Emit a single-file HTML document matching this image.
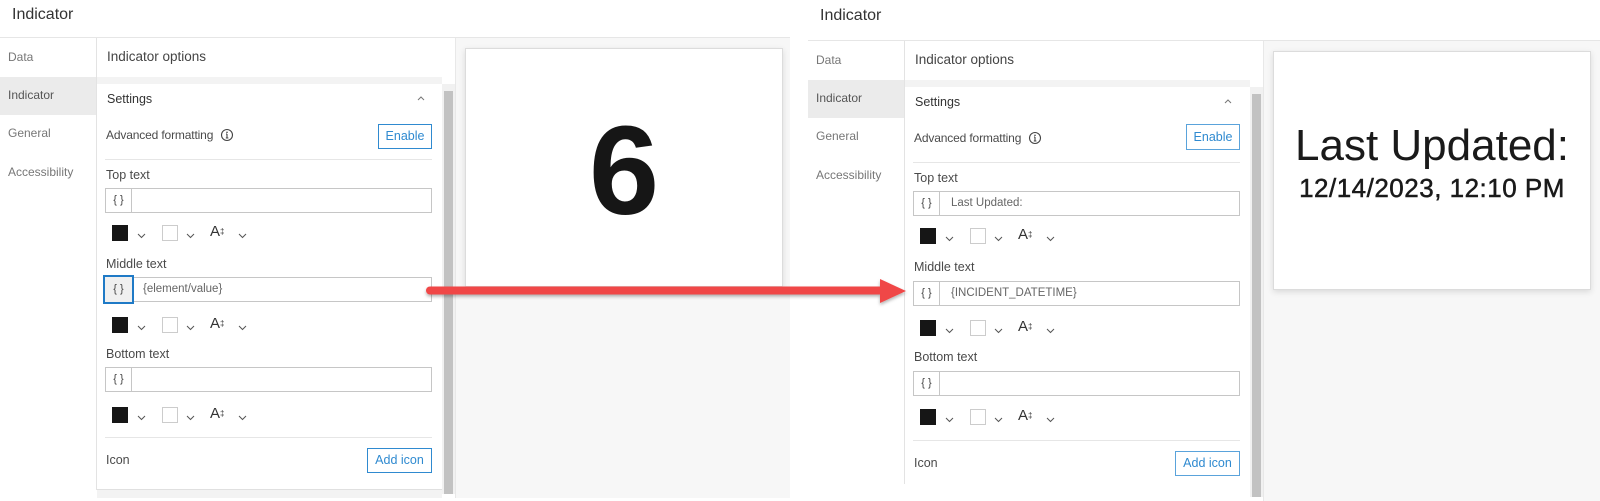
<!DOCTYPE html>
<html><head><meta charset="utf-8">
<style>
*{box-sizing:border-box;margin:0;padding:0}
body{width:1600px;height:498px;background:#fff;position:relative;overflow:hidden;font-family:"Liberation Sans",sans-serif;color:#4a4a4a}
.shot{position:absolute;top:0;height:498px;overflow:hidden;background:#fff}
.a{position:absolute}
.t{position:absolute;font-size:12.5px;line-height:16px;white-space:nowrap}
.title{left:12px;top:5px;font-size:16px;color:#333;line-height:20px}
.hline{left:0;right:0;top:37px;height:1px;background:#e6e6e6}
.nav{left:0;top:38px;width:97px;height:452px;border-right:1px solid #e3e3e3}
.navi{position:absolute;left:8px;font-size:12px;color:#777}
.band{left:0;top:77px;width:96px;height:38px;background:#ebebeb}
.strip{left:97px;top:77px;width:345px;height:7px;background:#f3f3f3}
.scroll{left:442px;top:84px;width:13px;height:410px;background:#f1f1f1}
.thumb{left:444px;top:91px;width:9px;height:403px;background:#c2c2c2}
.prev{left:455px;top:38px;width:337px;height:460px;background:#f7f7f7;border-left:1px solid #e8e8e8}
.card{left:465px;top:48px;width:318px;height:239px;background:#fff;border:1px solid #dcdcdc;box-shadow:0 2px 6px rgba(0,0,0,.12)}
.btn{position:absolute;border:1px solid #2f8ad0;color:#2f8ad0;font-size:12.5px;text-align:center;background:#fff}
.div{position:absolute;left:105px;width:327px;height:1px;background:#e6e6e6}
.inp{position:absolute;left:105px;width:327px;height:25px;border:1px solid #c6c6c6;background:#fff}
.brace{position:absolute;left:0;top:0;width:26px;height:23px;border-right:1px solid #c6c6c6;font-size:11px;text-align:center;line-height:23px;color:#444}
.itext{position:absolute;left:37px;top:0;line-height:23px;font-size:11.5px;color:#666}
.sw{position:absolute;width:16px;height:16px}
.chev{position:absolute;width:9px;height:6px}
.adv{left:106px;top:127px;font-size:12px;letter-spacing:-0.15px}
</style></head><body>

<!-- LEFT SHOT -->
<div class="shot" style="left:0;width:790px">
 <div class="t title">Indicator</div>
 <div class="a hline"></div>
 <div class="a nav"></div>
 <div class="a band"></div>
 <div class="navi" style="top:50px">Data</div>
 <div class="navi" style="top:88px;color:#555">Indicator</div>
 <div class="navi" style="top:126px">General</div>
 <div class="navi" style="top:165px">Accessibility</div>
 <div class="t" style="left:107px;top:49px;font-size:13.5px;color:#444">Indicator options</div>
 <div class="a strip"></div>
 <div class="a" style="left:97px;top:489px;width:345px;height:1px;background:#e0e0e0"></div>
 <div class="a" style="left:97px;top:490px;width:345px;height:8px;background:#f3f3f3"></div>
 <div class="a scroll"></div><div class="a thumb"></div>
 <div class="t" style="left:107px;top:91px;color:#333">Settings</div>
 <svg class="a" style="left:417px;top:95px" width="8" height="6"><path d="M1 5 L4 2 L7 5" fill="none" stroke="#777" stroke-width="1"/></svg>
 <div class="t adv">Advanced formatting</div>
 <svg class="a" style="left:220px;top:128px" width="14" height="14"><circle cx="7" cy="7" r="5.5" fill="none" stroke="#444" stroke-width="1.1"/><path d="M7 6v4M5.8 10h2.6M6 6h1" stroke="#444" stroke-width="1.1" fill="none"/><circle cx="7" cy="4.3" r=".8" fill="#444"/></svg>
 <div class="btn" style="left:378px;top:124px;width:54px;height:25px;line-height:23px">Enable</div>
 <div class="div" style="top:159px"></div>
 <div class="t" style="left:106px;top:167px">Top text</div>
 <div class="inp" style="top:188px"><div class="brace">{ }</div></div>
 <div style="position:absolute;left:0;top:233px">
  <div class="sw" style="left:112px;top:-8px;background:#161616"></div>
  <svg class="chev" style="left:137px;top:0px"><path d="M1 1l3.5 3.5 3.5-3.5" fill="none" stroke="#555"/></svg>
  <div class="sw" style="left:162px;top:-8px;border:1px solid #ccc"></div>
  <svg class="chev" style="left:186px;top:0px"><path d="M1 1l3.5 3.5 3.5-3.5" fill="none" stroke="#555"/></svg>
  <div class="t" style="left:210px;top:-9px;font-size:15px;color:#333">A<span style="font-size:8px;vertical-align:top">‡</span></div>
  <svg class="chev" style="left:238px;top:0px"><path d="M1 1l3.5 3.5 3.5-3.5" fill="none" stroke="#555"/></svg>
 </div>
 <div class="t" style="left:106px;top:256px">Middle text</div>
 <div class="inp" style="top:277px"><div class="itext">{element/value}</div></div>
 <div class="a" style="left:103px;top:275px;width:31px;height:29px;border:2px solid #1f7ac6;background:#f0f0f0;font-size:11px;text-align:center;line-height:25px;color:#444">{ }</div>
 <div style="position:absolute;left:0;top:325px">
  <div class="sw" style="left:112px;top:-8px;background:#161616"></div>
  <svg class="chev" style="left:137px;top:0px"><path d="M1 1l3.5 3.5 3.5-3.5" fill="none" stroke="#555"/></svg>
  <div class="sw" style="left:162px;top:-8px;border:1px solid #ccc"></div>
  <svg class="chev" style="left:186px;top:0px"><path d="M1 1l3.5 3.5 3.5-3.5" fill="none" stroke="#555"/></svg>
  <div class="t" style="left:210px;top:-9px;font-size:15px;color:#333">A<span style="font-size:8px;vertical-align:top">‡</span></div>
  <svg class="chev" style="left:238px;top:0px"><path d="M1 1l3.5 3.5 3.5-3.5" fill="none" stroke="#555"/></svg>
 </div>
 <div class="t" style="left:106px;top:346px">Bottom text</div>
 <div class="inp" style="top:367px"><div class="brace">{ }</div></div>
 <div style="position:absolute;left:0;top:415px">
  <div class="sw" style="left:112px;top:-8px;background:#161616"></div>
  <svg class="chev" style="left:137px;top:0px"><path d="M1 1l3.5 3.5 3.5-3.5" fill="none" stroke="#555"/></svg>
  <div class="sw" style="left:162px;top:-8px;border:1px solid #ccc"></div>
  <svg class="chev" style="left:186px;top:0px"><path d="M1 1l3.5 3.5 3.5-3.5" fill="none" stroke="#555"/></svg>
  <div class="t" style="left:210px;top:-9px;font-size:15px;color:#333">A<span style="font-size:8px;vertical-align:top">‡</span></div>
  <svg class="chev" style="left:238px;top:0px"><path d="M1 1l3.5 3.5 3.5-3.5" fill="none" stroke="#555"/></svg>
 </div>
 <div class="div" style="top:437px"></div>
 <div class="t" style="left:106px;top:452px">Icon</div>
 <div class="btn" style="left:367px;top:448px;width:65px;height:25px;line-height:23px">Add icon</div>
 <div class="a prev"></div>
 <div class="a card"><div style="position:absolute;left:0;right:0;top:52px;text-align:center;font-size:126px;font-weight:bold;color:#161616;line-height:140px">6</div></div>
</div>

<!-- RIGHT SHOT -->
<div class="shot" style="left:808px;top:3px;width:792px">
 <div class="t title" style="top:3px">Indicator</div>
 <div class="a hline"></div>
 <div class="a nav" style="height:443px"></div>
 <div class="a band"></div>
 <div class="navi" style="top:50px">Data</div>
 <div class="navi" style="top:88px;color:#555">Indicator</div>
 <div class="navi" style="top:126px">General</div>
 <div class="navi" style="top:165px">Accessibility</div>
 <div class="t" style="left:107px;top:49px;font-size:13.5px;color:#444">Indicator options</div>
 <div class="a strip"></div>
 <div class="a scroll"></div><div class="a thumb"></div>
 <div class="t" style="left:107px;top:91px;color:#333">Settings</div>
 <svg class="a" style="left:416px;top:95px" width="8" height="6"><path d="M1 5 L4 2 L7 5" fill="none" stroke="#777" stroke-width="1"/></svg>
 <div class="t adv">Advanced formatting</div>
 <svg class="a" style="left:220px;top:128px" width="14" height="14"><circle cx="7" cy="7" r="5.5" fill="none" stroke="#444" stroke-width="1.1"/><path d="M7 6v4M5.8 10h2.6M6 6h1" stroke="#444" stroke-width="1.1" fill="none"/><circle cx="7" cy="4.3" r=".8" fill="#444"/></svg>
 <div class="btn" style="left:378px;top:121px;width:54px;height:26px;line-height:24px;border-color:#5aa3db">Enable</div>
 <div class="div" style="top:159px"></div>
 <div class="t" style="left:106px;top:167px">Top text</div>
 <div class="inp" style="top:188px"><div class="brace">{ }</div><div class="itext">Last Updated:</div></div>
 <div style="position:absolute;left:0;top:233px">
  <div class="sw" style="left:112px;top:-8px;background:#161616"></div>
  <svg class="chev" style="left:137px;top:0px"><path d="M1 1l3.5 3.5 3.5-3.5" fill="none" stroke="#555"/></svg>
  <div class="sw" style="left:162px;top:-8px;border:1px solid #ccc"></div>
  <svg class="chev" style="left:186px;top:0px"><path d="M1 1l3.5 3.5 3.5-3.5" fill="none" stroke="#555"/></svg>
  <div class="t" style="left:210px;top:-9px;font-size:15px;color:#333">A<span style="font-size:8px;vertical-align:top">‡</span></div>
  <svg class="chev" style="left:238px;top:0px"><path d="M1 1l3.5 3.5 3.5-3.5" fill="none" stroke="#555"/></svg>
 </div>
 <div class="t" style="left:106px;top:256px">Middle text</div>
 <div class="inp" style="top:278px"><div class="brace">{ }</div><div class="itext">{INCIDENT_DATETIME}</div></div>
 <div style="position:absolute;left:0;top:325px">
  <div class="sw" style="left:112px;top:-8px;background:#161616"></div>
  <svg class="chev" style="left:137px;top:0px"><path d="M1 1l3.5 3.5 3.5-3.5" fill="none" stroke="#555"/></svg>
  <div class="sw" style="left:162px;top:-8px;border:1px solid #ccc"></div>
  <svg class="chev" style="left:186px;top:0px"><path d="M1 1l3.5 3.5 3.5-3.5" fill="none" stroke="#555"/></svg>
  <div class="t" style="left:210px;top:-9px;font-size:15px;color:#333">A<span style="font-size:8px;vertical-align:top">‡</span></div>
  <svg class="chev" style="left:238px;top:0px"><path d="M1 1l3.5 3.5 3.5-3.5" fill="none" stroke="#555"/></svg>
 </div>
 <div class="t" style="left:106px;top:346px">Bottom text</div>
 <div class="inp" style="top:368px"><div class="brace">{ }</div></div>
 <div style="position:absolute;left:0;top:414px">
  <div class="sw" style="left:112px;top:-8px;background:#161616"></div>
  <svg class="chev" style="left:137px;top:0px"><path d="M1 1l3.5 3.5 3.5-3.5" fill="none" stroke="#555"/></svg>
  <div class="sw" style="left:162px;top:-8px;border:1px solid #ccc"></div>
  <svg class="chev" style="left:186px;top:0px"><path d="M1 1l3.5 3.5 3.5-3.5" fill="none" stroke="#555"/></svg>
  <div class="t" style="left:210px;top:-9px;font-size:15px;color:#333">A<span style="font-size:8px;vertical-align:top">‡</span></div>
  <svg class="chev" style="left:238px;top:0px"><path d="M1 1l3.5 3.5 3.5-3.5" fill="none" stroke="#555"/></svg>
 </div>
 <div class="div" style="top:437px"></div>
 <div class="t" style="left:106px;top:452px">Icon</div>
 <div class="btn" style="left:367px;top:448px;width:65px;height:25px;line-height:23px;border-color:#5aa3db">Add icon</div>
 <div class="a prev" style="width:340px"></div>
 <div class="a card">
  <div style="position:absolute;left:0;right:0;top:69px;text-align:center;font-size:44px;color:#1a1a1a;line-height:50px">Last Updated:</div>
  <div style="position:absolute;left:0;right:0;top:121px;text-align:center;font-size:26px;color:#1a1a1a;line-height:30px;letter-spacing:.5px;-webkit-text-stroke:.5px #1a1a1a">12/14/2023, 12:10 PM</div>
 </div>
</div>

<!-- ARROW -->
<svg class="a" style="left:0;top:0" width="1600" height="498">
 <defs><filter id="sh" x="-5%" y="-50%" width="110%" height="200%"><feDropShadow dx="0" dy="2" stdDeviation="1.5" flood-color="#000" flood-opacity=".3"/></filter></defs>
 <g filter="url(#sh)">
  <line x1="430" y1="290.5" x2="884" y2="290.5" stroke="#f04646" stroke-width="8" stroke-linecap="round"/>
  <polygon points="880,279 906,291 880,303" fill="#f04646"/>
 </g>
</svg>
</body></html>
